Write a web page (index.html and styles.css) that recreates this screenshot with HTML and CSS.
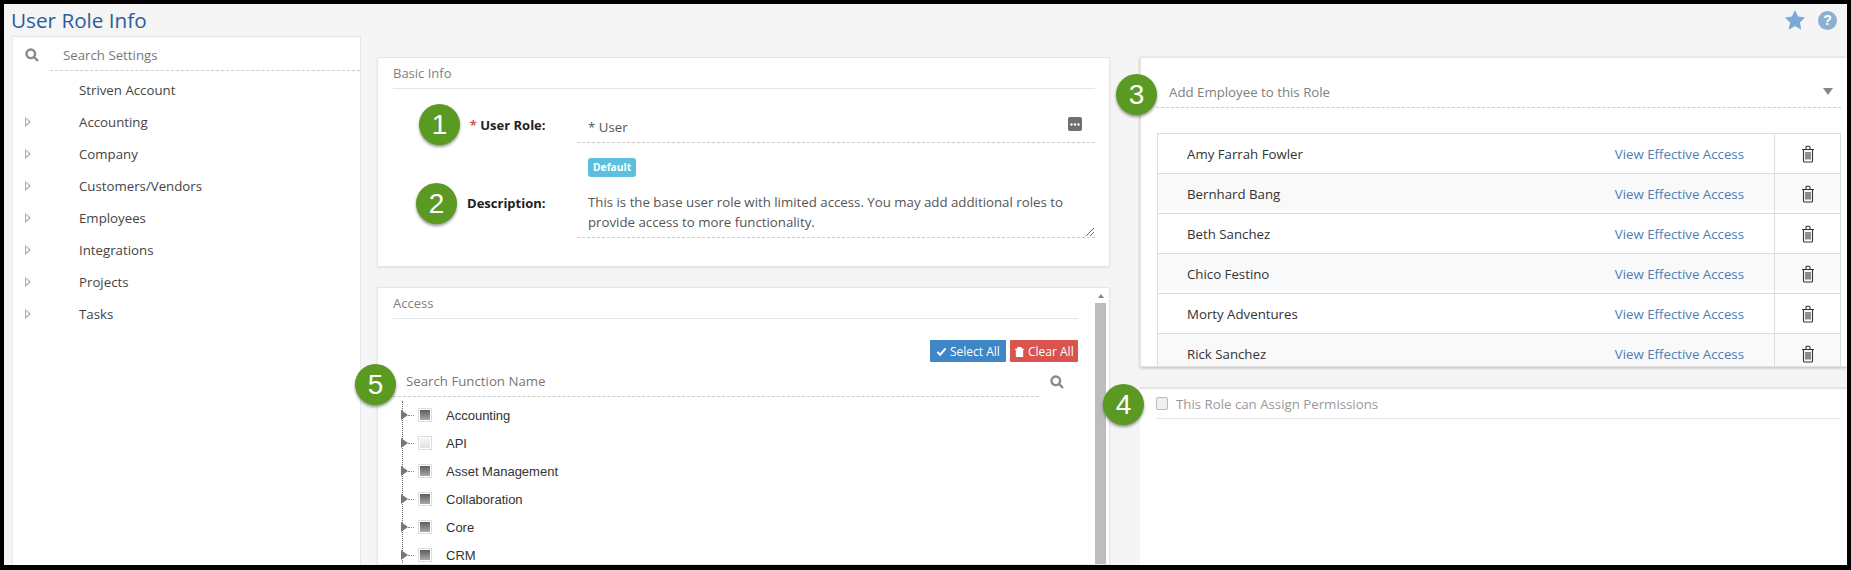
FILE: index.html
```html
<!DOCTYPE html>
<html lang="en">
<head>
<meta charset="utf-8">
<title>User Role Info</title>
<link rel="stylesheet" href="styles.css">
</head>
<body>
<div class="frame">
  <header class="topbar">
    <h1 class="page-title">User Role Info</h1>
    <div class="top-icons">
      <svg class="star" viewBox="0 0 24 24" width="22" height="22"><path d="M12 1l3.4 7.2 7.6 1-5.6 5.4 1.5 7.9L12 18.6l-6.9 3.9 1.5-7.9L1 9.2l7.6-1z"/></svg>
      <span class="help">?</span>
    </div>
  </header>
  <div class="main">
    <aside class="sidebar">
      <div class="side-search">
        <svg class="ic-search" viewBox="0 0 14 14" width="14" height="14"><circle cx="5.8" cy="5.8" r="4.3"/><path d="M9 9l4 4"/></svg>
        <div class="side-search-text">Search Settings</div>
      </div>
      <ul class="side-list">
        <li class="side-item"><span class="arrow-slot"></span>Striven Account</li>
        <li class="side-item"><span class="arrow-slot"><i class="hollow"></i></span>Accounting</li>
        <li class="side-item"><span class="arrow-slot"><i class="hollow"></i></span>Company</li>
        <li class="side-item"><span class="arrow-slot"><i class="hollow"></i></span>Customers/Vendors</li>
        <li class="side-item"><span class="arrow-slot"><i class="hollow"></i></span>Employees</li>
        <li class="side-item"><span class="arrow-slot"><i class="hollow"></i></span>Integrations</li>
        <li class="side-item"><span class="arrow-slot"><i class="hollow"></i></span>Projects</li>
        <li class="side-item"><span class="arrow-slot"><i class="hollow"></i></span>Tasks</li>
      </ul>
    </aside>

    <section class="middle">
      <div class="panel basic">
        <div class="panel-title">Basic Info</div>
        <div class="form-row first">
          <div class="form-label"><span class="req">*</span> User Role:</div>
          <div class="form-field">
            <div class="input-line">
              <span>* User</span>
              <svg class="dots" viewBox="0 0 14 14" width="14" height="14"><rect width="14" height="14" rx="2"/><circle cx="3.5" cy="7.5" r="1.2"/><circle cx="7" cy="7.5" r="1.2"/><circle cx="10.5" cy="7.5" r="1.2"/></svg>
            </div>
            <span class="default-tag">Default</span>
          </div>
        </div>
        <div class="form-row second">
          <div class="form-label">Description:</div>
          <div class="form-field">
            <div class="text-line">This is the base user role with limited access. You may add additional roles to provide access to more functionality.
              <svg class="resizer" viewBox="0 0 10 10" width="10" height="10"><path d="M1 9l8-8M5 9l4-4"/></svg>
            </div>
          </div>
        </div>
      </div>

      <div class="panel access">
        <div class="access-body">
          <div class="panel-title flush">Access</div>
          <div class="btn-row">
            <span class="btn btn-blue"><svg class="btn-ic" viewBox="0 0 12 12" width="11" height="11"><path d="M1.5 6.5l3 3 6-7"/></svg>Select All</span>
            <span class="btn btn-red"><svg class="btn-tr" viewBox="0 0 12 12" width="11" height="11"><path d="M1 3h10v1H10v8H2V4H1zM4 1h4l1 2H3z"/></svg>Clear All</span>
          </div>
          <div class="fn-search">
            <div class="fn-search-text">Search Function Name</div>
            <svg class="ic-search" viewBox="0 0 14 14" width="14" height="14"><circle cx="5.8" cy="5.8" r="4.3"/><path d="M9 9l4 4"/></svg>
          </div>
          <ul class="tree">
            <li class="tree-row"><i class="solid"></i><i class="check on"></i><span>Accounting</span></li>
            <li class="tree-row"><i class="solid"></i><i class="check"></i><span>API</span></li>
            <li class="tree-row"><i class="solid"></i><i class="check on"></i><span>Asset Management</span></li>
            <li class="tree-row"><i class="solid"></i><i class="check on"></i><span>Collaboration</span></li>
            <li class="tree-row"><i class="solid"></i><i class="check on"></i><span>Core</span></li>
            <li class="tree-row"><i class="solid"></i><i class="check on"></i><span>CRM</span></li>
          </ul>
        </div>
        <div class="scrollbar"><i class="scroll-up"></i><div class="scroll-thumb"></div></div>
      </div>
    </section>

    <section class="right">
      <div class="panel employees">
        <div class="combo"><span>Add Employee to this Role</span><i class="combo-arrow"></i></div>
        <div class="emp-table">
          <div class="emp-row"><div class="emp-name">Amy Farrah Fowler</div><a class="emp-link">View Effective Access</a><div class="emp-del"><svg class="trash" viewBox="0 0 14 18" width="14" height="18"><use href="#trash-o"/></svg></div></div>
          <div class="emp-row"><div class="emp-name">Bernhard Bang</div><a class="emp-link">View Effective Access</a><div class="emp-del"><svg class="trash" viewBox="0 0 14 18" width="14" height="18"><use href="#trash-o"/></svg></div></div>
          <div class="emp-row"><div class="emp-name">Beth Sanchez</div><a class="emp-link">View Effective Access</a><div class="emp-del"><svg class="trash" viewBox="0 0 14 18" width="14" height="18"><use href="#trash-o"/></svg></div></div>
          <div class="emp-row"><div class="emp-name">Chico Festino</div><a class="emp-link">View Effective Access</a><div class="emp-del"><svg class="trash" viewBox="0 0 14 18" width="14" height="18"><use href="#trash-o"/></svg></div></div>
          <div class="emp-row"><div class="emp-name">Morty Adventures</div><a class="emp-link">View Effective Access</a><div class="emp-del"><svg class="trash" viewBox="0 0 14 18" width="14" height="18"><use href="#trash-o"/></svg></div></div>
          <div class="emp-row"><div class="emp-name">Rick Sanchez</div><a class="emp-link">View Effective Access</a><div class="emp-del"><svg class="trash" viewBox="0 0 14 18" width="14" height="18"><use href="#trash-o"/></svg></div></div>
        </div>
      </div>
      <div class="panel perms">
        <div class="perm-row"><i class="perm-box"></i><span>This Role can Assign Permissions</span></div>
      </div>
    </section>
  </div>

  <span class="step step-1">1</span>
  <span class="step step-2">2</span>
  <span class="step step-3">3</span>
  <span class="step step-4">4</span>
  <span class="step step-5">5</span>

  <svg class="defs" width="0" height="0"><defs><g id="trash-o"><path d="M1 4.5h12M2.5 4.5V16a1 1 0 0 0 1 1h7a1 1 0 0 0 1-1V4.5M5 4.5V2.2A1 1 0 0 1 6 1.2h2a1 1 0 0 1 1 1v2.3M5 7v7.5M7 7v7.5M9 7v7.5" fill="none" stroke="#333" stroke-width="1.1"/></g></defs></svg>
</div>
</body>
</html>
```
FILE: styles.css
```css
* { box-sizing: border-box; }
html, body { margin: 0; padding: 0; }
body { width: 1851px; height: 570px; overflow: hidden; font-family: "Open Sans", "Noto Sans", sans-serif; font-size: 13.25px; color: #333; }
ul { list-style: none; margin: 0; padding: 0; }
i { display: block; }

.frame { position: relative; width: 1851px; height: 570px; border: solid #000; border-width: 4px 4px 5px 4px; background: #f5f5f5; overflow: hidden; display: flex; flex-direction: column; }

.topbar { height: 32px; flex: none; display: flex; align-items: center; justify-content: space-between; padding: 0 10px 0 7px; }
.page-title { margin: 0; font-size: 20.7px; font-weight: 400; color: #2a5d9c; line-height: 32px; }
.top-icons { display: flex; align-items: center; gap: 12px; }
.star { fill: #79a9d4; display: block; }
.help { width: 19px; height: 19px; border-radius: 50%; background: #8cb0d0; color: #fff; font: bold 14px/19px "Liberation Sans", sans-serif; text-align: center; }

.main { flex: 1; min-height: 0; display: flex; align-items: stretch; padding-left: 8px; }

.sidebar { width: 349px; flex: none; background: #fff; border-top: 1px solid #e6e6e6; border-left: 1px solid #e8e8e8; border-right: 1px solid #e8e8e8; }
.side-search { display: flex; align-items: center; height: 34px; }
.side-search .ic-search { margin: 2px 0 0 12px; flex: none; }
.ic-search { fill: none; stroke: #8a8a8a; stroke-width: 2.4; display: block; }
.side-search-text { flex: 1; margin-left: 11px; height: 34px; padding-left: 13px; line-height: 36px; color: #777; border-bottom: 1px dashed #ccc; }
.side-list { padding-top: 3px; }
.side-item { height: 32px; line-height: 32px; display: flex; align-items: center; color: #444; }
.arrow-slot { width: 66px; flex: none; padding-left: 12px; }
.hollow { width: 6px; height: 10px; background: #aaa; clip-path: polygon(0 0, 100% 50%, 0 100%, 0 80%, 70% 50%, 18% 20%, 18% 80%, 0 80%); }

.middle { width: 733px; flex: none; margin-left: 16px; padding-top: 21px; display: flex; flex-direction: column; gap: 20px; }
.panel { background: #fff; border: 1px solid #e6e6e6; box-shadow: 0 1px 2px rgba(0,0,0,.08); }
.panel-title { margin: 0 14px 0 15px; height: 31px; line-height: 30px; color: #808080; font-size: 13px; border-bottom: 1px solid #e6e6e6; }
.panel-title.flush { margin: 0; }

.basic { height: 210px; flex: none; }
.form-row { display: flex; margin: 0 14px 0 15px; }
.form-row.first { margin-top: 21px; }
.form-row.second { margin-top: 16px; }
.form-label { width: 152.5px; flex: none; text-align: right; font-size: 13px; font-weight: 700; color: #222; line-height: 30px; }
.form-row.second .form-label { line-height: 20px; }
.req { color: #d9534f; }
.form-field { flex: 1; margin-left: 31.5px; }
.input-line { height: 33px; border-bottom: 1px dashed #ccc; padding: 0 13px 0 11px; display: flex; align-items: center; justify-content: space-between; color: #555; }
.input-line span { padding-top: 1px; }
.dots { display: block; margin-bottom: 4px; }
.dots rect { fill: #6f6f6f; }
.dots circle { fill: #fff; }
.default-tag { display: inline-block; margin: 15px 0 0 11px; height: 19px; padding: 0 5px; border-radius: 3px; background: #5bc0de; color: #fff; font-size: 10.25px; font-weight: 700; line-height: 19px; vertical-align: top; }
.text-line { position: relative; height: 46px; margin-top: -1px; padding: 0 11px; line-height: 20px; color: #555; border-bottom: 1px dashed #ccc; }
.resizer { position: absolute; right: 0; bottom: 0; fill: none; stroke: #666; stroke-width: 1; }

.access { flex: 1; min-height: 0; display: flex; overflow: hidden; }
.access-body { width: 685px; flex: none; margin-left: 15px; }
.btn-row { display: flex; justify-content: flex-end; gap: 4px; margin-top: 21px; height: 22px; }
.btn { display: flex; align-items: center; gap: 3px; height: 22px; padding: 0 6px; color: #fff; font-size: 12px; border-radius: 1px; }
.btn-blue { background: #3f86c6; width: 76px; }
.btn-red { background: #d9534f; width: 68px; padding: 0 4px; }
.btn-ic { fill: none; stroke: #fff; stroke-width: 2.2; flex: none; }
.btn-tr { fill: #fff; flex: none; }
.fn-search { display: flex; align-items: center; height: 35px; }
.fn-search-text { width: 646px; height: 35px; padding-left: 13px; line-height: 38px; color: #777; border-bottom: 1px dashed #ccc; }
.fn-search .ic-search { margin: 4px 0 0 11px; }
.tree { margin: 4px 0 0 9px; border-left: 1px dotted #666; }
.tree-row { height: 28px; display: flex; align-items: center; font-family: "Liberation Sans", Arial, sans-serif; font-size: 13px; color: #333; position: relative; }
.solid { width: 0; height: 0; margin-left: -2px; border-left: 7px solid #777; border-top: 5px solid transparent; border-bottom: 5px solid transparent; flex: none; }
.tree-row::before { content: ""; position: absolute; left: 5px; top: 14px; width: 6px; border-top: 1px dotted #888; }
.check { width: 14px; height: 14px; margin-left: 10px; border: 1px solid #ddd; background: linear-gradient(#f8f8f8, #dedede); background-clip: content-box; padding: 1px; flex: none; position: relative; }
.check.on { background: linear-gradient(#555, #b0b0b0); background-clip: content-box; }
.tree-row span { margin-left: 14px; }

.scrollbar { width: 11px; margin-left: 17px; flex: none; display: flex; flex-direction: column; }
.scroll-up { width: 0; height: 0; margin: 6px auto 5px; border-left: 3px solid transparent; border-right: 3px solid transparent; border-bottom: 4px solid #888; }
.scroll-thumb { flex: 1; background: #bdbdbd; }

.right { flex: 1; min-width: 0; margin-left: 30px; padding-top: 21px; display: flex; flex-direction: column; gap: 20px; }
.employees { height: 310px; flex: none; overflow: hidden; border-right: 0; padding: 0 6px 0 15px; box-shadow: 0 1px 3px rgba(0,0,0,.25); }
.combo { margin-top: 18px; height: 32px; border-bottom: 1px dashed #ccc; padding: 0 8px 0 13px; display: flex; align-items: center; justify-content: space-between; color: #808080; }
.combo-arrow { width: 0; height: 0; border-left: 5px solid transparent; border-right: 5px solid transparent; border-top: 7px solid #888; }
.emp-table { margin: 25px 0 0 1px; border-top: 1px solid #ddd; border-left: 1px solid #ddd; border-right: 1px solid #ddd; }
.emp-row { height: 40px; display: flex; align-items: center; border-bottom: 1px solid #ddd; }
.emp-row:nth-child(even) { background: linear-gradient(#f9f9f9 36px, #fff 36px); }
.emp-name { flex: 1; padding-left: 29px; color: #333; }
.emp-link { color: #4a7fb5; margin-right: 30px; }
.emp-del { width: 66px; height: 100%; flex: none; border-left: 1px solid #ddd; display: flex; align-items: center; justify-content: center; }
.trash { display: block; overflow: visible; }
.perms { flex: 1; min-height: 0; padding: 0 6px 0 16px; border-width: 2px 0 0; border-color: #e6e6e6; box-shadow: none; }
.perm-row { height: 30px; display: flex; align-items: center; gap: 8px; border-bottom: 1px solid #e6e6e6; color: #999; }
.perm-box { width: 12px; height: 13px; border: 1px solid #bbb; border-radius: 2px; background: #f0f0f0; flex: none; }

.step { position: absolute; width: 41px; height: 41px; border-radius: 50%; background: #5a9a22; color: #fff; font: 28px/41px "Liberation Sans", Arial, sans-serif; text-align: center; box-shadow: 0 2px 3px rgba(0,0,0,.4); }
.step-1 { left: 415px; top: 100px; }
.step-2 { left: 412px; top: 179px; }
.step-3 { left: 1112px; top: 70px; }
.step-4 { left: 1099px; top: 380px; }
.step-5 { left: 351px; top: 360px; }
.defs { position: absolute; }
```
